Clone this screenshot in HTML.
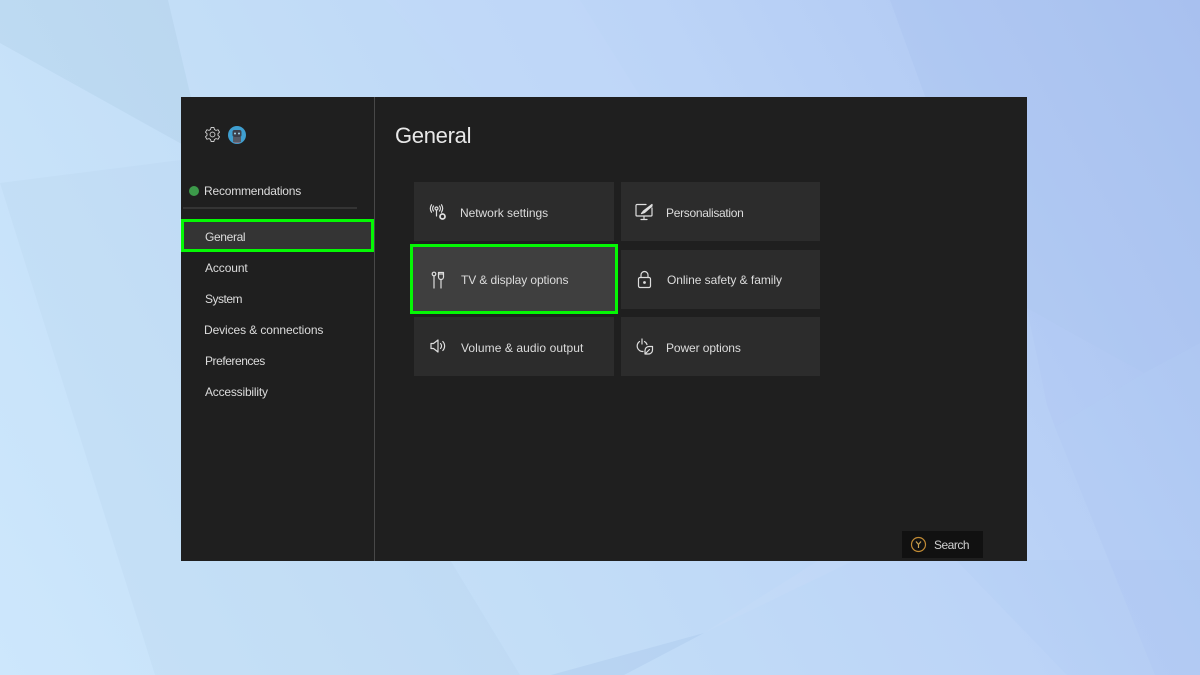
<!DOCTYPE html>
<html><head><meta charset="utf-8"><style>
html,body{margin:0;padding:0;width:1200px;height:675px;overflow:hidden;background:#bdd6f6;font-family:"Liberation Sans",sans-serif}
#bg{position:absolute;left:0;top:0}
#panel{position:absolute;left:181px;top:97px;width:846px;height:464px;background:#1f1f1f}
.a{position:absolute;white-space:nowrap}
.t{color:#dcdcdc;font-size:12px;line-height:16px;letter-spacing:-.1px;filter:blur(.3px)}
.tile{position:absolute;width:200px;height:59px;background:#2c2c2c}
svg.i{position:absolute;fill:none;stroke:#dedede;stroke-width:1.2;stroke-linecap:round;stroke-linejoin:round;filter:blur(.25px)}
</style></head><body>
<svg id="bg" width="1200" height="675" viewBox="0 0 1200 675">
<defs><linearGradient id="g" x1="0" y1="675" x2="1200" y2="0" gradientUnits="userSpaceOnUse">
<stop offset="0" stop-color="#cde7fc"/><stop offset=".35" stop-color="#c3def7"/><stop offset=".65" stop-color="#bcd4f7"/><stop offset="1" stop-color="#abc3f1"/></linearGradient></defs>
<rect width="1200" height="675" fill="url(#g)"/>
<polygon points="0,0 168,0 205,157 0,43" fill="#9cbcd8" fill-opacity=".2"/>
<polygon points="0,183 205,157 520,675 155,675" fill="#a9c8e6" fill-opacity=".14"/>
<polygon points="385,0 580,0 640,96 480,96" fill="#cfe2fb" fill-opacity=".12"/>
<polygon points="890,0 1200,0 1200,343 1144,373 1027,308 925,96" fill="#9db5ea" fill-opacity=".18"/>
<polygon points="1055,427 1144,373 1027,308 1047,405" fill="#9db5ea" fill-opacity=".1"/>
<polygon points="1055,427 1144,373 1200,343 1200,675 1155,675" fill="#9db8ea" fill-opacity=".1"/>
<polygon points="704,633 551,675 624,675" fill="#9fbde6" fill-opacity=".28"/>
<polygon points="819,560 855,560 704,633" fill="#d3e5fb" fill-opacity=".14"/>
<polygon points="956,560 1067,675 1200,675 1200,560" fill="#9db8ea" fill-opacity=".07"/>
</svg>
<div id="panel"></div>
<div class="a" style="left:374px;top:97px;width:1px;height:464px;background:#484848"></div>
<div class="a" style="left:183px;top:207px;width:174px;height:2px;background:#343434"></div>

<svg class="i" style="left:204px;top:126px" width="17" height="17" viewBox="0 0 24 24" stroke-width="1.7"><path d="M10 2h4l.7 3 2.2 1.2 3-.9 2 3.4-2.2 2.1v2.4l2.2 2.1-2 3.4-3-.9L14.700 19 14 22h-4l-.7-3-2.2-1.200-3 .9-2-3.400 2.200-2.100v-2.400L2.100 8.700l2-3.400 3 .9L9.300 5z"/><circle cx="12" cy="12" r="3.500"/></svg>
<svg class="a" style="left:227px;top:125px" width="20" height="20" viewBox="0 0 20 20"><circle cx="10" cy="10" r="9" fill="#3f9fd0"/><rect x="5.500" y="5" width="9" height="7" rx="2" fill="#3c3f4a"/><rect x="6" y="12" width="8" height="5" fill="#555a66"/><path d="M6 17.500a7 3 0 0 0 8 0z" fill="#b5443f"/><circle cx="8" cy="8.500" r="1" fill="#9fd6ee"/><circle cx="12" cy="8.500" r="1" fill="#9fd6ee"/></svg>

<div class="a" style="left:189px;top:186px;width:10px;height:10px;border-radius:50%;background:#3c9a4a"></div>
<div class="a t" style="left:204px;top:183px;letter-spacing:-.2px">Recommendations</div>

<div class="a" style="left:181px;top:219px;width:187px;height:27px;border:3px solid #04f804;background:#343434"></div>
<div class="a t" style="left:205px;top:228.500px;letter-spacing:-.35px">General</div>
<div class="a t" style="left:205px;top:259.500px">Account</div>
<div class="a t" style="left:205px;top:290.500px;letter-spacing:-.5px">System</div>
<div class="a t" style="left:204px;top:321.500px">Devices &amp; connections</div>
<div class="a t" style="left:205px;top:352.500px;letter-spacing:-.45px">Preferences</div>
<div class="a t" style="left:205px;top:383.500px;letter-spacing:-.2px">Accessibility</div>

<div class="a" style="left:395px;top:122px;color:#e8e8e8;font-size:22px;line-height:28px;letter-spacing:-.3px;filter:blur(.3px)">General</div>

<div class="tile" style="left:414px;top:182px"></div>
<div class="tile" style="left:621px;top:182px;width:199px"></div>
<div class="tile" style="left:621px;top:250px;width:199px"></div>
<div class="tile" style="left:414px;top:317px"></div>
<div class="tile" style="left:621px;top:317px;width:199px"></div>
<div class="a" style="left:410px;top:244px;width:202px;height:64px;border:3px solid #04f804;background:#3f3f3f"></div>

<svg class="i" style="left:429px;top:204px" width="18" height="17" viewBox="0 0 18 17"><circle cx="7.500" cy="4.500" r="1.500"/><path d="M7.500 6v6M4.500 2a4 4 0 0 0 0 5M10.500 2a4 4 0 0 1 0 5M2.500 .8a7 7 0 0 0 0 7.400M12.500 .8a7 7 0 0 1 0 7.400"/><circle cx="13.500" cy="12.500" r="2.500" stroke-width="1.800"/></svg>
<div class="a t" style="left:460px;top:205px;letter-spacing:-.04px">Network settings</div>

<svg class="i" style="left:431px;top:271px" width="14" height="18" viewBox="0 0 14 18"><circle cx="3" cy="3" r="1.800"/><path d="M3 5v12M7.500 1.500h5V6a2.500 2.500 0 0 1-5 0zM10 8.500V17M9 1.500v2M11 1.500v2"/></svg>
<div class="a t" style="left:461px;top:272px">TV &amp; display options</div>

<svg class="i" style="left:430px;top:339px" width="16" height="14" viewBox="0 0 16 14"><path d="M1 4.500h2.500L8 1v12L3.500 9.500H1zM10.500 4.500a3.500 3.500 0 0 1 0 5M12.800 2.500a6.500 6.500 0 0 1 0 9"/></svg>
<div class="a t" style="left:461px;top:339.500px;letter-spacing:.08px">Volume &amp; audio output</div>

<svg class="i" style="left:635px;top:203px" width="18" height="18" viewBox="0 0 18 18"><path d="M11 1.500H2a1 1 0 0 0-1 1V12a1 1 0 0 0 1 1h14a1 1 0 0 0 1-1V5M6 16.500h6M9 13v3.500"/><path d="M17 1.500 8.500 8 6.500 10.500 9.500 9.500 17 3z" fill="#dedede"/></svg>
<div class="a t" style="left:666px;top:205px;letter-spacing:-.3px">Personalisation</div>

<svg class="i" style="left:637px;top:270px" width="15" height="19" viewBox="0 0 15 19"><rect x="1.500" y="7.500" width="12" height="10" rx="1.500"/><path d="M4 7.500V5a3.500 3.500 0 0 1 7 0v2.500"/><circle cx="7.500" cy="12.500" r=".8" fill="#dedede"/></svg>
<div class="a t" style="left:667px;top:272px;letter-spacing:-.05px">Online safety &amp; family</div>

<svg class="i" style="left:635px;top:338px" width="19" height="18" viewBox="0 0 19 18"><path d="M4.500 3.500a5.500 5.500 0 0 0 3.500 10M7 1v5M9.500 3.500a5.500 5.500 0 0 1 2.500 3"/><path d="M17.500 8.500v3.500a4 4 0 0 1-4 4H10v-3.500a4 4 0 0 1 4-4zM10.500 15.500l4-4"/></svg>
<div class="a t" style="left:666px;top:339.500px">Power options</div>

<div class="a" style="left:902px;top:531px;width:81px;height:27px;background:#111"></div>
<svg class="a" style="left:910px;top:536px" width="17" height="17" viewBox="0 0 17 17"><circle cx="8.500" cy="8.500" r="7" fill="none" stroke="#c08a34" stroke-width="1.200"/><path d="M6 5.500 8.500 8.500 11 5.500M8.500 8.500V12" fill="none" stroke="#c9a253" stroke-width="1.200"/></svg>
<div class="a t" style="left:934px;top:537px;color:#d0d0d0;letter-spacing:-.5px">Search</div>
</body></html>
